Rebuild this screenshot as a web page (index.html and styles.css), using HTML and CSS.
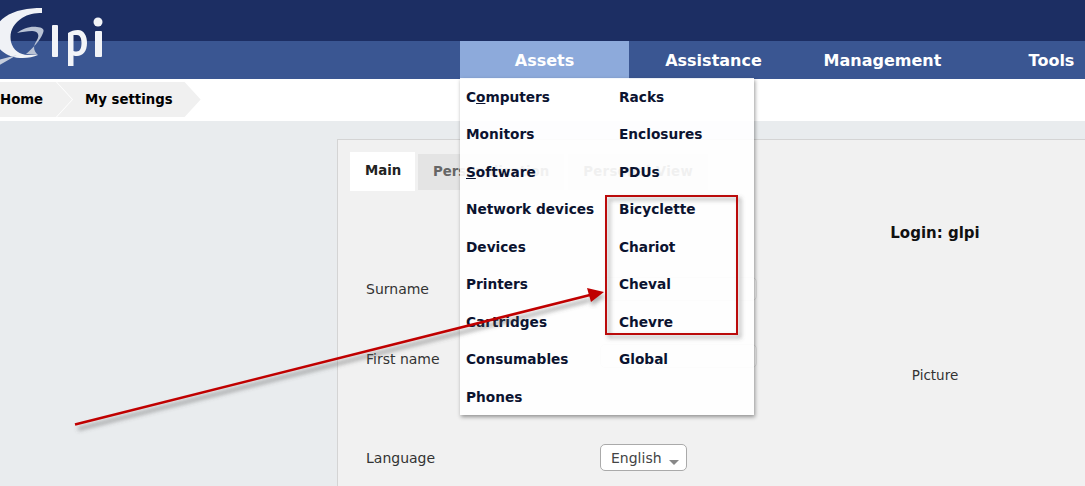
FILE: index.html
```html
<!DOCTYPE html>
<html lang="en">
<head>
    <meta charset="UTF-8">
    <title>GLPI - My settings</title>
    <link rel="stylesheet" href="styles.css">
</head>
<body>
    <header class="top-bar">
        <svg class="logo" width="110" height="70" viewBox="0 0 110 70">
            <path d="M42 8 C28 8 15 10 5 17 C2 19 0 21 -2 24 L-2 47 C3 53 10 57 20 58 C27 58.500 33 57 38 55 L28 55 C20 55 13 50 11 42 C9 32 13 24 22 18 C28 14 35 13 42 13 Z" fill="#f0f2f6"/>
            <path d="M17 33 C22 29 30 26 37 27 C42 27.500 45 29 43 33 C40 41 33 48 26 54 L38 55 C33 50 33 46 37 40 C40 35 38 31 32 31 C27 31 22 32 17 33 Z" fill="#b9c2d4"/>
            <path d="M-2 66 L17 55 L-2 60 Z" fill="#c6cedd"/>
            <rect x="52" y="25" width="6" height="32" rx="1" fill="#f2f4f8"/>
            <path d="M68 33 C71 31 74 30 78 30 C84 30 87 36 87 43 C87 51 83 56 77 56 C75.500 56 74.500 56 73.500 55.500 V66 H68 Z M73.500 35 V51 C74.500 51.500 75.500 51.500 76.500 51.500 C80 51.500 81.500 48 81.500 43 C81.500 38 80 35 77 35 Z" fill="#f2f4f8" fill-rule="evenodd"/>
            <rect x="95" y="31" width="7" height="26" rx="1" fill="#f2f4f8"/>
            <circle cx="98" cy="22" r="4.500" fill="#f2f4f8"/>
        </svg>
    </header>

    <nav class="main-nav">
        <a class="nav-item active" href="#">Assets</a>
        <a class="nav-item" href="#">Assistance</a>
        <a class="nav-item" href="#">Management</a>
        <a class="nav-item" href="#">Tools</a>
    </nav>

    <div class="crumbs">
        <a class="crumb first" href="#">Home</a>
        <a class="crumb" href="#">My settings</a>
    </div>

    <main class="content">
        <section class="panel">
            <div class="tabs">
                <span class="tab current">Main</span>
                <span class="tab">Personalization</span>
                <span class="tab view">Personal View</span>
            </div>
            <form class="settings">
                <h3 class="login-title">Login: glpi</h3>
                <label class="row-surname">Surname</label>
                <input class="field row-surname" type="text">
                <label class="row-first">First name</label>
                <input class="field row-first lifted" type="text">
                <span class="picture">Picture</span>
                <label class="row-lang">Language</label>
                <span class="select row-lang">English <i class="caret"></i></span>
            </form>
        </section>
    </main>

    <div class="dropdown">
        <ul class="menu-col">
            <li>C<u>o</u>mputers</li>
            <li>Monitors</li>
            <li><u>S</u>oftware</li>
            <li>Network devices</li>
            <li>Devices</li>
            <li>Printers</li>
            <li>Cartridges</li>
            <li>Consumables</li>
            <li>Phones</li>
        </ul>
        <ul class="menu-col">
            <li>Racks</li>
            <li>Enclosures</li>
            <li>PDUs</li>
            <li>Bicyclette</li>
            <li>Chariot</li>
            <li>Cheval</li>
            <li>Chevre</li>
            <li>Global</li>
        </ul>
    </div>

    <!-- annotation drawn over the screenshot -->
    <svg class="annotation" width="1085" height="486" viewBox="0 0 1085 486">
        <defs>
            <filter id="soft" x="-10%" y="-10%" width="120%" height="130%">
                <feGaussianBlur stdDeviation="2"/>
            </filter>
        </defs>
        <g fill="none" stroke="#555" stroke-opacity="0.55" filter="url(#soft)">
            <rect x="609" y="199" width="131" height="138" stroke-width="2"/>
            <line x1="78" y1="429" x2="590" y2="300" stroke-width="3"/>
        </g>
        <path d="M592 306 L606 296 L590 292 Z" fill="#555" fill-opacity="0.45" filter="url(#soft)"/>
        <rect x="606" y="196" width="131" height="138" fill="none" stroke="#bb0b0b" stroke-width="2"/>
        <line x1="75" y1="424.500" x2="590" y2="295" stroke="#c00000" stroke-width="2.500"/>
        <path d="M604 292 L587 288 L591 302 Z" fill="#c00000"/>
    </svg>
</body>
</html>
```

FILE: styles.css
```css
* {
    box-sizing: border-box;
}
html, body {
    margin: 0;
    height: 486px;
    overflow: hidden;
}
body {
    position: relative;
    width: 1085px;
    font-family: "DejaVu Sans", Verdana, sans-serif;
    font-size: 13px;
    background-color: #e9ecee;
    color: #333;
}
a {
    text-decoration: none;
}

.top-bar {
    height: 41px;
    background-color: #1c2e63;
}
.logo {
    position: absolute;
    top: 0;
    left: 0;
    z-index: 3;
}

.main-nav {
    display: flex;
    height: 38px;
    padding-left: 460px;
    background-color: #3a5692;
}
.nav-item {
    flex: none;
    width: 169px;
    line-height: 39px;
    text-align: center;
    color: #fff;
    font-size: 16px;
    font-weight: bold;
}
.nav-item.active {
    background-color: #8daadb;
}

.crumbs {
    display: flex;
    height: 42px;
    padding-top: 3px;
    background-color: #fff;
}
.crumb {
    display: block;
    height: 35px;
    line-height: 35px;
    padding: 0 28px;
    margin-right: -15px;
    background-color: #f0f0f0;
    color: #000;
    font-size: 13.300px;
    font-weight: bold;
    clip-path: polygon(0 0, calc(100% - 16px) 0, 100% 50%, calc(100% - 16px) 100%, 0 100%, 16px 50%);
}
.crumb.first {
    padding-left: 0;
    width: 72px;
    clip-path: polygon(0 0, calc(100% - 16px) 0, 100% 50%, calc(100% - 16px) 100%, 0 100%);
}

.content {
    height: 365px;
    padding: 18px 0 0 337px;
}
.panel {
    height: 360px;
    width: 760px;
    padding: 12px 0 0 12px;
    border: 1px solid #d4d4d4;
    background-color: #f1f1f1;
}

.tabs {
    display: flex;
    align-items: center;
    gap: 3px;
    height: 39px;
}
.tab {
    height: 36px;
    padding: 0 15px;
    line-height: 36px;
    font-weight: bold;
    font-size: 13.300px;
    background-color: #e4e4e4;
    color: #666;
}
.tab.current {
    width: 65px;
    height: 39px;
    line-height: 37px;
    background-color: #fff;
    color: #222;
}
.tab.view {
    margin-left: 1px;
    letter-spacing: 0.300px;
}

/* label / field / picture columns */
.settings {
    display: grid;
    grid-template-columns: 234px 190px 290px;
    grid-template-rows: 54px 60px 80px 32px 54px;
    align-items: center;
    margin-top: 14px;
    padding-left: 16px;
    font-size: 14px;
}
.login-title {
    grid-column: 3;
    grid-row: 1;
    margin: 2px 0 0;
    text-align: center;
    font-size: 15px;
    color: #111;
}
.row-surname { grid-row: 2; }
.row-first { grid-row: 3; }
.row-lang { grid-row: 5; }
.field {
    grid-column: 2;
    width: 157px;
    height: 24px;
    border: 1px solid #ddd;
    border-radius: 5px;
    background-color: #f6f6f6;
}
.field.lifted {
    margin-bottom: 7px;
}
.picture {
    grid-column: 3;
    grid-row: 3 / span 2;
    text-align: center;
    font-size: 13.500px;
}
.select {
    grid-column: 2;
    width: 87px;
    height: 27px;
    margin-bottom: 2px;
    line-height: 26px;
    padding-left: 10px;
    border: 1px solid #aaa;
    border-radius: 5px;
    background-color: #fff;
    color: #444;
}
.caret {
    display: inline-block;
    margin-left: 3px;
    border-left: 5px solid transparent;
    border-right: 5px solid transparent;
    border-top: 5px solid #888;
    vertical-align: -2px;
}

.dropdown {
    position: absolute;
    top: 78px;
    left: 460px;
    z-index: 2;
    display: flex;
    width: 294px;
    height: 337px;
    padding-top: 0.500px;
    background-color: rgba(255, 255, 255, 0.9);
    box-shadow: 1px 2px 4px rgba(0, 0, 0, 0.4);
}
.menu-col {
    flex: none;
    margin: 0;
    padding: 0 0 0 6px;
    list-style: none;
    width: 141px;
}
.menu-col:first-child {
    width: 153px;
}
.menu-col li {
    height: 37.500px;
    line-height: 37.500px;
    color: #0b1330;
    font-size: 13.700px;
    font-weight: bold;
    white-space: nowrap;
}

.annotation {
    position: absolute;
    top: 0;
    left: 0;
    z-index: 4;
}
```
